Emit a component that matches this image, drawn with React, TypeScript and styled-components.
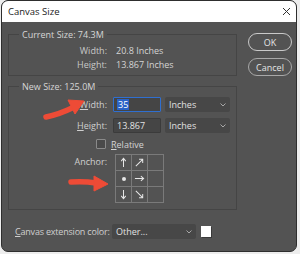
import styled, { createGlobalStyle } from "styled-components";

const GlobalStyle = createGlobalStyle`
  html, body {
    margin: 0;
    padding: 0;
    background: #ededed;
  }
  body {
    font-family: "Open Sans", "Noto Sans", sans-serif;
    font-size: 9px;
    color: #d4d4d4;
  }
`;

const Window = styled.div`
  position: relative;
  margin-left: 1px;
  width: 296px;
  height: 252px;
  box-sizing: border-box;
  border: 1px solid #2e2e2e;
  border-radius: 7px;
  background: #535353;
  overflow: hidden;
`;

const TitleBar = styled.div`
  height: 21px;
  background: #ffffff;
  display: flex;
  align-items: center;
  justify-content: space-between;
  padding: 0 5px 0 6px;
  color: #1a1a1a;
  font-size: 9.5px;
`;

const CloseButton = styled.span`
  display: flex;
  align-items: center;
`;

const Body = styled.div`
  display: grid;
  grid-template-columns: 229px 44px;
  column-gap: 11px;
  padding: 6px 0 0 6px;
`;

const Main = styled.div`
  display: flex;
  flex-direction: column;
`;

const Group = styled.fieldset<{ $gap?: number; $pt?: number; $pb?: number }>`
  margin: 0 0 4px;
  padding: ${(p) => p.$pt ?? 2}px 0 ${(p) => p.$pb ?? 4}px;
  border: 1px solid #454545;
  display: flex;
  flex-direction: column;
  gap: ${(p) => p.$gap ?? 0}px;
  min-width: 0;
`;

const Legend = styled.legend`
  margin-left: 10px;
  padding: 0 3px;
  line-height: 13px;
  color: #d6d6d6;
`;

const InfoRow = styled.div`
  display: flex;
  align-items: center;
  height: 14px;
`;

const InfoLabel = styled.span`
  width: 98px;
  text-align: right;
  margin-right: 9px;
  color: #c8c8c8;
`;

const FormRow = styled.div<{ $top?: boolean }>`
  display: flex;
  align-items: ${(p) => (p.$top ? "flex-start" : "center")};
  gap: 4px;
`;

const FieldLabel = styled.span`
  width: 98px;
  margin-right: 2px;
  text-align: right;
  color: #cfcfcf;
`;

const TextInput = styled.div<{ $active?: boolean }>`
  width: 48px;
  height: 15px;
  box-sizing: border-box;
  display: flex;
  align-items: center;
  padding-left: 3px;
  background: #454545;
  border: 1px solid ${(p) => (p.$active ? "#2f6fd0" : "#3b3b3b")};
  border-radius: 1px;
  color: #e2e2e2;
`;

const Selected = styled.span`
  background: #2a62c6;
  color: #ffffff;
  padding: 0 1px;
  line-height: 11px;
`;

const Select = styled.div<{ $w: number }>`
  width: ${(p) => p.$w}px;
  height: 15px;
  box-sizing: border-box;
  display: flex;
  align-items: center;
  justify-content: space-between;
  padding: 0 4px;
  background: #474747;
  border-radius: 2px;
  color: #e0e0e0;
`;

const CheckRow = styled.div`
  display: flex;
  align-items: center;
  gap: 5px;
  padding-left: 87px;
  height: 14px;
  margin-top: -2px;
`;

const Checkbox = styled.span`
  width: 8px;
  height: 8px;
  border: 1px solid #8a8a8a;
  border-radius: 1px;
  background: #4a4a4a;
`;

const AnchorGrid = styled.div`
  display: grid;
  grid-template-columns: repeat(3, 16px);
  grid-template-rows: repeat(3, 16px);
  border-top: 1px solid #7a7a7a;
  border-left: 1px solid #7a7a7a;
  margin-left: 2px;
  margin-top: -3px;
`;

const Cell = styled.div`
  border-right: 1px solid #7a7a7a;
  border-bottom: 1px solid #7a7a7a;
  display: flex;
  align-items: center;
  justify-content: center;
`;

const AnchorLabel = styled(FieldLabel)`
  margin-top: -2px;
`;

const ExtRow = styled.div`
  display: flex;
  align-items: center;
  margin-top: 10px;
  padding-left: 7px;
`;

const ExtLabel = styled.span`
  flex: none;
  width: 97px;
  white-space: nowrap;
  letter-spacing: -0.2px;
  color: #cfcfcf;
`;

const Swatch = styled.span`
  width: 10px;
  height: 11px;
  margin-left: 5px;
  background: #ffffff;
  box-shadow: 1px 1px 0 #3a3a3a;
`;

const Buttons = styled.div`
  display: flex;
  flex-direction: column;
  gap: 7px;
  padding-top: 5px;
`;

const Button = styled.div<{ $primary?: boolean }>`
  height: 18px;
  box-sizing: border-box;
  border: 1.5px solid ${(p) => (p.$primary ? "#c9c9c9" : "#a8a8a8")};
  border-radius: 9px;
  display: flex;
  align-items: center;
  justify-content: center;
  color: #e4e4e4;
`;

const U = styled.span`
  text-decoration: underline;
  text-underline-offset: 1px;
`;

const Annotation = styled.svg`
  position: absolute;
  left: 0;
  top: 0;
  pointer-events: none;
`;

const Chevron = () => (
  <svg width="6" height="4" viewBox="0 0 6 4">
    <path d="M0.5 0.5 L3 3 L5.5 0.5" stroke="#a8a8a8" strokeWidth="1" fill="none" />
  </svg>
);

const Arrow = ({ d }: { d: string }) => (
  <svg width="11" height="11" viewBox="0 0 12 12">
    <path d={d} stroke="#e6e6e6" strokeWidth="1.1" fill="none" />
  </svg>
);

const anchorCells = [
  <Arrow d="M6 11 V2 M3.5 4.5 L6 1.5 L8.5 4.5" />,
  <Arrow d="M2 10 L9.5 2.5 M5.5 2.5 H9.5 V6.5" />,
  null,
  <svg width="12" height="12" viewBox="0 0 12 12"><circle cx="6" cy="6" r="2" fill="#e6e6e6" /></svg>,
  <Arrow d="M1 6 H10 M7.5 3.5 L10.5 6 L7.5 8.5" />,
  null,
  <Arrow d="M6 1 V10 M3.5 7.5 L6 10.5 L8.5 7.5" />,
  <Arrow d="M2 2 L9.5 9.5 M5.5 9.5 H9.5 V5.5" />,
  null,
];

export default function App() {
  return (
    <>
      <GlobalStyle />
      <Window>
        <TitleBar>
          <span>Canvas Size</span>
          <CloseButton>
            <svg width="9" height="9" viewBox="0 0 9 9">
              <path d="M1 1 L8 8 M8 1 L1 8" stroke="#333" strokeWidth="1" />
            </svg>
          </CloseButton>
        </TitleBar>
        <Body>
          <Main>
            <Group>
              <Legend>Current Size: 74.3M</Legend>
              <InfoRow>
                <InfoLabel>Width:</InfoLabel>
                <span>20.8 Inches</span>
              </InfoRow>
              <InfoRow>
                <InfoLabel>Height:</InfoLabel>
                <span>13.867 Inches</span>
              </InfoRow>
            </Group>
            <Group $gap={6} $pt={4} $pb={6}>
              <Legend>New Size: 125.0M</Legend>
              <FormRow>
                <FieldLabel>
                  <U>W</U>idth:
                </FieldLabel>
                <TextInput $active>
                  <Selected>35</Selected>
                </TextInput>
                <Select $w={65}>
                  Inches <Chevron />
                </Select>
              </FormRow>
              <FormRow>
                <FieldLabel>
                  <U>H</U>eight:
                </FieldLabel>
                <TextInput>13.867</TextInput>
                <Select $w={65}>
                  Inches <Chevron />
                </Select>
              </FormRow>
              <CheckRow>
                <Checkbox />
                <span>
                  <U>R</U>elative
                </span>
              </CheckRow>
              <FormRow $top>
                <AnchorLabel>Anchor:</AnchorLabel>
                <AnchorGrid>
                  {anchorCells.map((c, i) => (
                    <Cell key={i}>{c}</Cell>
                  ))}
                </AnchorGrid>
              </FormRow>
            </Group>
            <ExtRow>
              <ExtLabel>
                <U>C</U>anvas extension color:
              </ExtLabel>
              <Select $w={84}>
                Other... <Chevron />
              </Select>
              <Swatch />
            </ExtRow>
          </Main>
          <Buttons>
            <Button $primary>OK</Button>
            <Button>Cancel</Button>
          </Buttons>
        </Body>
        <Annotation width="296" height="252" viewBox="0 0 296 252">
          <path d="M44 116 Q58 113 70 107" stroke="#ee4b36" strokeWidth="5.5" strokeLinecap="round" fill="none" />
          <path d="M66 99 L82 100 L73 113 Z" fill="#ee4b36" strokeLinejoin="round" stroke="#ee4b36" strokeWidth="1" />
          <path d="M69 181 Q82 180 94 182" stroke="#ee4b36" strokeWidth="5.5" strokeLinecap="round" fill="none" />
          <path d="M92 175 L106 183 L92 190 Z" fill="#ee4b36" strokeLinejoin="round" stroke="#ee4b36" strokeWidth="1" />
        </Annotation>
      </Window>
    </>
  );
}
